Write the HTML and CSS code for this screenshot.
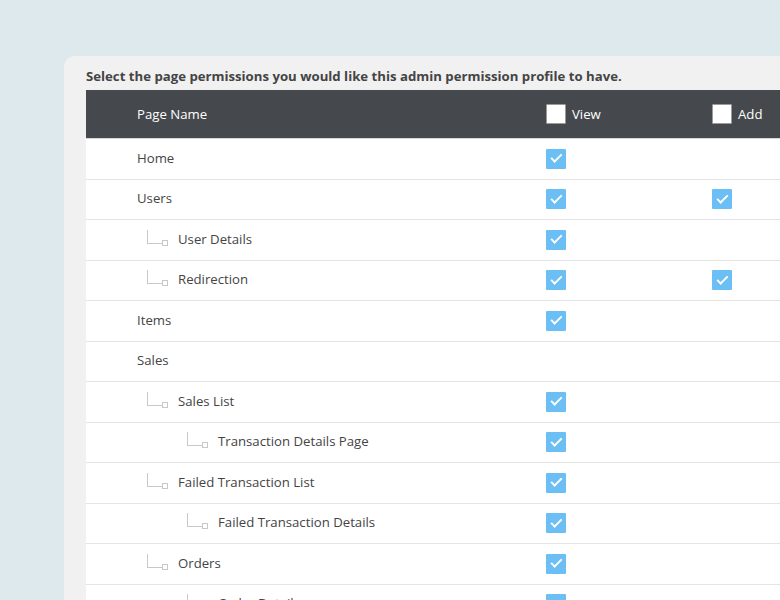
FILE: index.html
```html
<!DOCTYPE html>
<html>
<head>
<meta charset="utf-8">
<link rel="stylesheet" href="styles.css">
</head>
<body>
<div class="card">
  <p class="title">Select the page permissions you would like this admin permission profile to have.</p>
  <div class="table">
    <div class="row head">
      <div class="name">Page Name</div>
      <div class="col"><span class="box empty"></span><span>View</span></div>
      <div class="col"><span class="box empty"></span><span>Add</span></div>
    </div>
    <div class="row"><div class="name">Home</div><div class="col"><span class="box on"></span></div><div class="col"></div></div>
    <div class="row"><div class="name">Users</div><div class="col"><span class="box on"></span></div><div class="col"><span class="box on"></span></div></div>
    <div class="row"><div class="name l1"><span class="tree"></span>User Details</div><div class="col"><span class="box on"></span></div><div class="col"></div></div>
    <div class="row"><div class="name l1"><span class="tree"></span>Redirection</div><div class="col"><span class="box on"></span></div><div class="col"><span class="box on"></span></div></div>
    <div class="row"><div class="name">Items</div><div class="col"><span class="box on"></span></div><div class="col"></div></div>
    <div class="row"><div class="name">Sales</div><div class="col"></div><div class="col"></div></div>
    <div class="row"><div class="name l1"><span class="tree"></span>Sales List</div><div class="col"><span class="box on"></span></div><div class="col"></div></div>
    <div class="row"><div class="name l2"><span class="tree"></span>Transaction Details Page</div><div class="col"><span class="box on"></span></div><div class="col"></div></div>
    <div class="row"><div class="name l1"><span class="tree"></span>Failed Transaction List</div><div class="col"><span class="box on"></span></div><div class="col"></div></div>
    <div class="row"><div class="name l2"><span class="tree"></span>Failed Transaction Details</div><div class="col"><span class="box on"></span></div><div class="col"></div></div>
    <div class="row"><div class="name l1"><span class="tree"></span>Orders</div><div class="col"><span class="box on"></span></div><div class="col"></div></div>
    <div class="row"><div class="name l2"><span class="tree"></span>Order Details</div><div class="col"><span class="box on"></span></div><div class="col"></div></div>
  </div>
</div>
</body>
</html>
```
FILE: styles.css
```css
html, body {
  margin: 0;
  padding: 0;
  height: 100%;
  overflow: hidden;
}
body {
  background: #dde9ed;
  font-family: "Open Sans", "Liberation Sans", sans-serif;
  color: #444;
}
.card {
  margin: 56px 0 0 64px;
  background: #f1f1f1;
  border-radius: 10px 0 0 0;
  padding: 7px 0 0 22px;
  height: 700px;
}
.title {
  margin: 0 0 1px 0;
  font-size: 13.2px;
  font-weight: 700;
  color: #444;
  line-height: 26px;
  white-space: nowrap;
}
.table {
  background: #fff;
}
.row {
  display: grid;
  grid-template-columns: 460px 166px 1fr;
  align-items: center;
  height: 40.5px;
  box-sizing: border-box;
  border-bottom: 1.5px solid #e4e4e4;
  font-size: 13.2px;
}
.row.head {
  height: 49px;
  background: #45484d;
  color: #fff;
  border-bottom: 1.5px solid #d8d8d8;
}
.name {
  padding-left: 51px;
  padding-bottom: 2px;
  display: flex;
  align-items: center;
  position: relative;
  white-space: nowrap;
  line-height: 18px;
}
.head .name { padding-bottom: 0; }
.name.l1 { padding-left: 92px; }
.name.l2 { padding-left: 132px; }
.tree {
  position: absolute;
  width: 14px;
  height: 13px;
  top: 0;
  border-left: 1px solid #c8c8c8;
  border-bottom: 1px solid #c8c8c8;
}
.tree::after {
  content: "";
  position: absolute;
  right: -6px;
  bottom: -3px;
  width: 4px;
  height: 4px;
  border: 1px solid #c8c8c8;
  background: #fff;
}
.l1 .tree { left: 61px; }
.l2 .tree { left: 101px; }
.col {
  display: flex;
  align-items: center;
  gap: 6px;
}
.box {
  width: 20px;
  height: 20px;
  box-sizing: border-box;
  border-radius: 1px;
  display: inline-block;
  position: relative;
}
.box.empty {
  background: #fff;
  border: 1.5px solid #9a9a9a;
}
.box.on {
  background: #6cbff5;
}
.box.on::after {
  content: "";
  position: absolute;
  left: 5px;
  top: 5.5px;
  width: 8.5px;
  height: 4px;
  border-left: 2px solid #fff;
  border-bottom: 2px solid #fff;
  transform: rotate(-45deg);
}
```
